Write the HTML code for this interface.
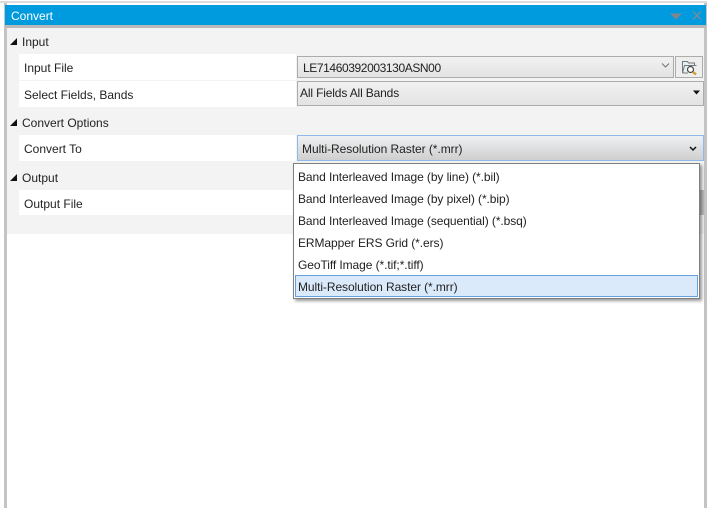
<!DOCTYPE html>
<html><head><meta charset="utf-8"><style>
html,body{margin:0;padding:0;background:#fff;width:707px;height:508px;overflow:hidden}
body{position:relative;font-family:"Liberation Sans",sans-serif;font-size:12px;color:#222}
div{position:absolute;box-sizing:border-box;white-space:nowrap}
.t{line-height:16px;height:16px}
.row{left:19px;width:277px;background:#fff}
.tri{width:0;height:0;border-left:7px solid transparent;border-bottom:7px solid #111}
.it{left:298px;letter-spacing:-.08px}
.combo{background:linear-gradient(#f1f1f1,#e3e3e3);border:1px solid #acacac}
</style></head><body>
<div style="left:0;top:1px;width:707px;height:2px;background:#dcdcdc"></div>
<div style="left:4px;top:3px;width:3px;height:505px;background:#c4c4c4"></div>
<div style="left:704px;top:3px;width:3px;height:505px;background:#c4c4c4"></div>
<div style="left:5px;top:5px;width:701px;height:20px;background:#009bde"></div>
<div style="left:5px;top:25px;width:701px;height:3px;background:#b9b9b9"></div>
<div class="t" style="left:11px;top:8px;color:#fff">Convert</div>
<svg style="position:absolute;left:670px;top:13px" width="12" height="7"><path d="M0 0.5H12L6 6.5Z" fill="#7f878c"/></svg>
<svg style="position:absolute;left:692px;top:11px" width="10" height="9"><path d="M1 0.5L9 8.5M9 0.5L1 8.5" stroke="#6f8c9c" stroke-width="1.5" fill="none"/></svg>

<div style="left:7px;top:28px;width:697px;height:206px;background:#f3f3f3"></div>
<div class="tri" style="left:10px;top:38px"></div>
<div class="t" style="left:22px;top:34px">Input</div>
<div class="row" style="top:54px;height:26px"></div>
<div class="t" style="left:24px;top:60px">Input File</div>
<div class="row" style="top:81px;height:26px"></div>
<div class="t" style="left:24px;top:87px">Select Fields, Bands</div>
<div class="tri" style="left:10px;top:119px"></div>
<div class="t" style="left:22px;top:115px">Convert Options</div>
<div class="row" style="top:135px;height:26px"></div>
<div class="t" style="left:24px;top:141px">Convert To</div>
<div class="tri" style="left:10px;top:174px"></div>
<div class="t" style="left:22px;top:170px">Output</div>
<div class="row" style="top:190px;height:25px"></div>
<div class="t" style="left:24px;top:196px">Output File</div>

<div class="combo" style="left:297px;top:56px;width:377px;height:22px"></div>
<div class="t" style="left:303px;top:60px;letter-spacing:-.4px">LE71460392003130ASN00</div>
<svg style="position:absolute;left:661px;top:62px" width="9" height="7"><path d="M1 1.5L4.5 5L8 1.5" stroke="#777" stroke-width="1.1" fill="none"/></svg>
<div class="combo" style="left:675px;top:56px;width:28px;height:22px;background:#eee"></div>
<svg style="position:absolute;left:681px;top:59px" width="17" height="17">
<path d="M1.5 14V2.5H6.5L7.5 4H13.5V7" stroke="#777" stroke-width="1" fill="#e3f1f7"/>
<path d="M1.5 14L3.5 6.5H15.5" stroke="#777" stroke-width="1" fill="none"/>
<path d="M1.5 14H7" stroke="#777" stroke-width="1" fill="none"/>
<circle cx="9.5" cy="10.5" r="3" fill="#fff" stroke="#444" stroke-width="1.2"/>
<path d="M12 13L15 15.5" stroke="#c9a227" stroke-width="2.4"/>
</svg>
<div class="combo" style="left:297px;top:81px;width:407px;height:25px"></div>
<div class="t" style="left:300px;top:85px;letter-spacing:-.15px">All Fields All Bands</div>
<svg style="position:absolute;left:693px;top:90px" width="7" height="5"><path d="M0 0.5H7L3.5 4.5Z" fill="#111"/></svg>
<div style="left:297px;top:135px;width:407px;height:26px;background:linear-gradient(#eef0f2,#cfcfcf);border:1px solid #8fb9e6"></div>
<div class="t" style="left:302px;top:141px;letter-spacing:-.05px">Multi-Resolution Raster (*.mrr)</div>
<svg style="position:absolute;left:689px;top:146px" width="8" height="6"><path d="M1 1L4 4L7 1" stroke="#111" stroke-width="1.5" fill="none"/></svg>
<div style="left:700px;top:190px;width:4px;height:25px;background:#bdbdbd"></div>

<div style="left:293px;top:163px;width:407px;height:136px;background:#fff;border:1px solid #808080;box-shadow:2px 2px 3px rgba(0,0,0,.4)"></div>
<div style="left:295px;top:275px;width:403px;height:22px;background:#dbeafb;border:1px solid #64a0dc"></div>
<div class="t it" style="top:169px">Band Interleaved Image (by line) (*.bil)</div>
<div class="t it" style="top:191px">Band Interleaved Image (by pixel) (*.bip)</div>
<div class="t it" style="top:213px">Band Interleaved Image (sequential) (*.bsq)</div>
<div class="t it" style="top:235px">ERMapper ERS Grid (*.ers)</div>
<div class="t it" style="top:257px">GeoTiff Image (*.tif;*.tiff)</div>
<div class="t it" style="top:279px">Multi-Resolution Raster (*.mrr)</div>
</body></html>
